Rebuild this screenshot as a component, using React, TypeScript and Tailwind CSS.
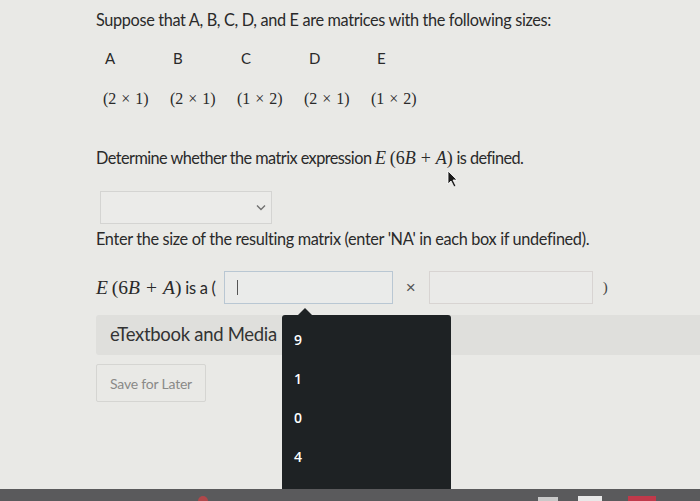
import React from "react";

const sizes = [
  ["2", "1"],
  ["2", "1"],
  ["1", "2"],
  ["2", "1"],
  ["1", "2"],
];
const letters = ["A", "B", "C", "D", "E"];
const tipItems = ["9", "1", "0", "4"];

function Expr({ big }: { big?: boolean }) {
  return (
    <span className={`font-['Liberation_Serif',serif] tracking-normal ${big ? "text-[19.5px]" : "text-[18px]"}`}>
      <i>E</i>&thinsp;(6<i>B</i>
      <span className={big ? "mx-[6px]" : "mx-[5px]"}>+</span>
      <i>A</i>)
    </span>
  );
}

export default function App() {
  return (
    <div className="relative w-[700px] h-[501px] overflow-hidden bg-[#e9e9e6] font-['Lato',sans-serif] text-[#2a2a2a]">
      <div className="flex flex-col pt-[9px] pl-[96px]">
        <p className="text-[16.3px] tracking-[-0.35px] leading-[22px]">
          Suppose that A, B, C, D, and E are matrices with the following sizes:
        </p>

        <div className="flex mt-[17px] pl-[9px] text-[15px] leading-[20px]">
          {letters.map((l) => (
            <span key={l} className="w-[68px]">{l}</span>
          ))}
        </div>

        <div className="flex gap-[14px] mt-[21px] pl-[7px] font-['Liberation_Serif',serif] text-[16px] leading-[20px]">
          {sizes.map((s, i) => (
            <span key={i} className="w-[53px] whitespace-nowrap flex">
              <span>({s[0]}</span>
              <span className="mx-[5px]">×</span>
              <span>{s[1]})</span>
            </span>
          ))}
        </div>

        <p className="mt-[38px] text-[16.3px] tracking-[-0.55px] leading-[22px]">
          Determine whether the matrix expression <Expr /> is defined.
        </p>

        <div className="mt-[22px] ml-[4px] w-[172px] h-[33px] border border-[#d4d4d2] bg-[#ebebe9] flex items-center justify-end pr-[5px]">
          <svg width="10" height="7" viewBox="0 0 10 7" fill="none" stroke="#707070" strokeWidth="1.4">
            <path d="M1 1.5l4 4 4-4" />
          </svg>
        </div>

        <p className="mt-[4px] text-[16.3px] tracking-[-0.35px] leading-[22px]">
          Enter the size of the resulting matrix (enter 'NA' in each box if undefined).
        </p>

        <div className="flex items-center mt-[21px] h-[33px]">
          <span className="text-[16.5px] tracking-[-0.3px] whitespace-nowrap">
            <Expr big /> is a (
          </span>
          <div className="ml-[8px] w-[169px] h-[33px] border border-[#b9c7d3] bg-[#eaebea] flex items-center pl-[12px]">
            <span className="w-[1px] h-[15px] bg-[#555]" />
          </div>
          <span className="mx-[13px] text-[17px] text-[#555] font-['Liberation_Sans',sans-serif]">×</span>
          <div className="w-[164px] h-[33px] border border-[#d8d4d2] bg-[#eaeae8]" />
          <span className="ml-[10px] text-[15px] text-[#444] font-['Liberation_Serif',serif]">)</span>
        </div>

        <div className="mt-[11px] -mr-[10px] h-[40px] bg-[#dfdfdc] rounded-l-[3px] flex items-center pl-[14px]">
          <span className="text-[18.5px] tracking-[-0.3px] text-[#333]">eTextbook and Media</span>
        </div>

        <div className="mt-[9px] w-[110px] h-[38px] border border-[#d5d5d2] rounded-[2px] flex items-center justify-center">
          <span className="text-[14px] text-[#8a8a88] tracking-[-0.2px]">Save for Later</span>
        </div>
      </div>

      {/* dropdown tooltip over the content */}
      <div className="absolute left-[282px] top-[315px] w-[169px] h-[176px] bg-[#1e2224] rounded-t-[3px] flex flex-col pl-[12px] pt-[16px] gap-[22px]">
        {tipItems.map((t) => (
          <span key={t} className="text-[14px] font-semibold text-white font-['Open_Sans',sans-serif] leading-[17px]">{t}</span>
        ))}
      </div>
      <div className="absolute left-[297px] top-[308px] w-0 h-0 border-l-[8px] border-r-[8px] border-b-[8px] border-l-transparent border-r-transparent border-b-[#1e2224]" />

      {/* cursor */}
      <svg className="absolute left-[447px] top-[170px]" width="12" height="18" viewBox="0 0 12 18">
        <path d="M1 1l0 13 3-3 3 6 2-1-3-6 4 0z" fill="#1a1a1a" stroke="#fff" strokeWidth="0.8" />
      </svg>

      {/* screen bezel at bottom */}
      <div className="absolute left-0 bottom-0 w-[700px] h-[12px] bg-[#5a5a5c] flex items-end">
        <span className="ml-[198px] w-[10px] h-[5px] rounded-t-full bg-[#b0474a]" />
        <span className="ml-[330px] w-[20px] h-[4px] bg-[#c9c9c9]" />
        <span className="ml-[20px] w-[24px] h-[5px] bg-[#e8e8e8]" />
        <span className="ml-[26px] w-[28px] h-[5px] bg-[#c0394a]" />
      </div>
    </div>
  );
}
